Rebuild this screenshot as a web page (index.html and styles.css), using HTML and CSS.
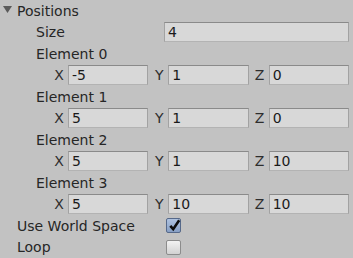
FILE: index.html
```html
<!DOCTYPE html>
<html>
<head>
	<meta charset="utf-8">
	<title>Positions</title>
	<link rel="stylesheet" href="styles.css">
</head>
<body>
	<div class="inspector">
		<div class="row foldout">
			<svg class="arrow" width="9" height="7" viewBox="0 0 9 7"><polygon points="0,0 9,0 4.5,7" fill="#5a5a5a"/></svg>
			<span>Positions</span>
		</div>
		<div class="row field-row">
			<span class="label indent">Size</span>
			<div class="field">4</div>
		</div>

		<div class="row"><span class="label indent">Element 0</span></div>
		<div class="row vector">
			<span class="axis">X</span><div class="field">-5</div>
			<span class="axis">Y</span><div class="field">1</div>
			<span class="axis">Z</span><div class="field">0</div>
		</div>

		<div class="row"><span class="label indent">Element 1</span></div>
		<div class="row vector">
			<span class="axis">X</span><div class="field">5</div>
			<span class="axis">Y</span><div class="field">1</div>
			<span class="axis">Z</span><div class="field">0</div>
		</div>

		<div class="row"><span class="label indent">Element 2</span></div>
		<div class="row vector">
			<span class="axis">X</span><div class="field">5</div>
			<span class="axis">Y</span><div class="field">1</div>
			<span class="axis">Z</span><div class="field">10</div>
		</div>

		<div class="row"><span class="label indent">Element 3</span></div>
		<div class="row vector">
			<span class="axis">X</span><div class="field">5</div>
			<span class="axis">Y</span><div class="field">10</div>
			<span class="axis">Z</span><div class="field">10</div>
		</div>

		<div class="row field-row">
			<span class="label">Use World Space</span>
			<div><span class="toggle on"><svg width="13" height="13" viewBox="0 0 13 13"><path d="M2.3 6.8 L5.2 10.2 L11.2 1.2" fill="none" stroke="#0d0d0d" stroke-width="2.6"/></svg></span></div>
		</div>
		<div class="row field-row">
			<span class="label">Loop</span>
			<div><span class="toggle"></span></div>
		</div>
	</div>
</body>
</html>
```

FILE: styles.css
```css
* {
	margin: 0;
	padding: 0;
	box-sizing: border-box;
}
body {
	background: #c2c2c2;
	font-family: "DejaVu Sans", sans-serif;
	font-size: 14px;
	color: #262626;
}
.row {
	height: 21.5px;
	display: flex;
	align-items: center;
	white-space: nowrap;
}
.foldout {
	padding-left: 3px;
}
.arrow {
	margin-right: 5px;
	margin-top: -3px;
}
.label {
	padding-left: 17px;
}
.label.indent {
	padding-left: 36px;
}
.field-row {
	display: grid;
	grid-template-columns: 164px 1fr;
	padding-right: 4px;
	align-items: center;
}
.vector {
	display: grid;
	grid-template-columns: 20px 1fr 20px 1fr 20px 1fr;
	padding-left: 48px;
	padding-right: 4px;
	align-items: center;
}
.axis {
	text-align: center;
	padding-left: 2px;
	color: #2e2e2e;
}
.field {
	height: 20px;
	line-height: 18px;
	padding-left: 3px;
	background: #d8d8d8;
	border: 1px solid #a2a2a2;
	border-top-color: #8a8a8a;
	border-bottom-color: #b3b3b3;
	color: #1a1a1a;
}
.toggle {
	display: block;
	width: 15px;
	height: 15px;
	margin-left: 2px;
	border: 1px solid #8c8c8c;
	border-radius: 2px;
	background: linear-gradient(#f2f2f2, #d2d2d2);
}
.toggle.on {
	border-color: #56698a;
	background: linear-gradient(#aec2e0, #879fc4);
}
.toggle svg {
	display: block;
	margin: 0 0 0 1px;
}
```
